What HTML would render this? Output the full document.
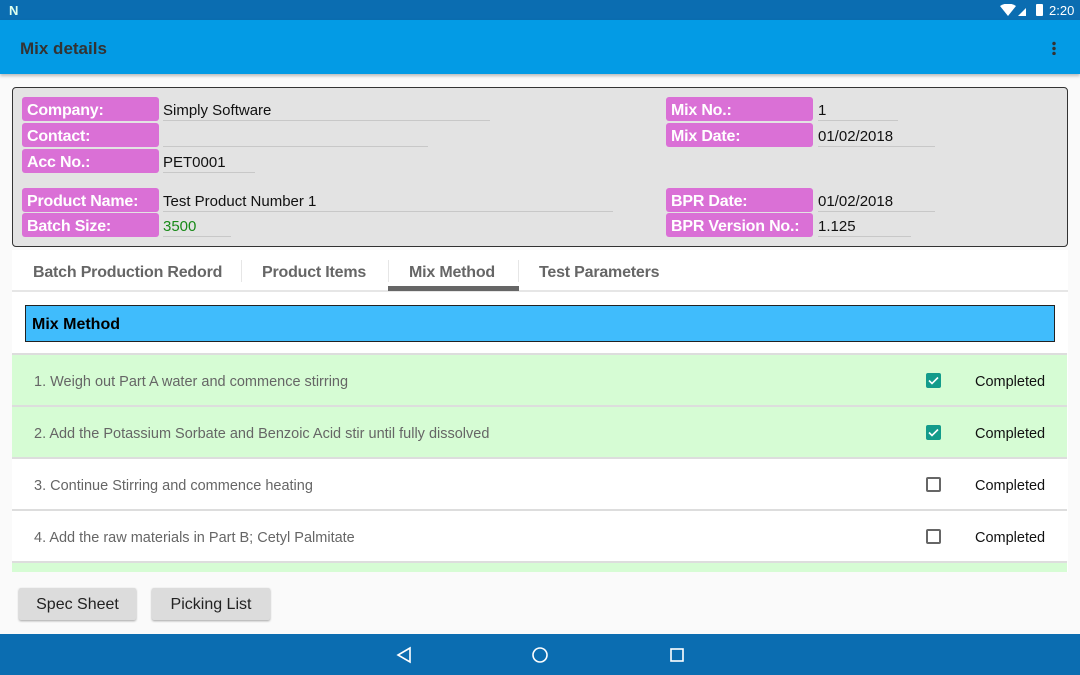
<!DOCTYPE html>
<html><head><style>
*{margin:0;padding:0;box-sizing:border-box}
body{width:1080px;height:675px;overflow:hidden;background:#fafafa;font-family:"Liberation Sans",sans-serif;position:relative}
.a{position:absolute}
.lbl{position:absolute;background:#da70d6;color:#fff;font-weight:bold;font-size:16px;height:24px;line-height:27px;padding-left:5px;border-radius:3px;width:137px;letter-spacing:-0.2px}
.val{position:absolute;font-size:15px;color:#111;height:24px;line-height:28px;border-bottom:1px solid #c8c8c8}
.tab{position:absolute;top:264px;font-size:16px;font-weight:bold;color:#666;letter-spacing:-0.2px}
.row{position:absolute;left:12px;width:1055px;height:52px;border-top:2px solid #ddd}
.row span{position:absolute;left:22px;top:19px;font-size:14.5px;color:#666}
.row b{position:absolute;left:963px;top:19px;font-size:14.5px;font-weight:normal;color:#111}
.cb{position:absolute;left:914px;top:18px;width:15px;height:15px;border-radius:2px}
.btn{position:absolute;top:588px;height:32px;background:#dcdcdc;font-size:16px;color:#222;line-height:34px;text-align:center;box-shadow:0 1px 2px rgba(0,0,0,.35);border-radius:2px}
</style></head><body>
<div class="a" style="left:0;top:0;width:1080px;height:20px;background:#0b6db1"></div>
<div class="a" style="left:9px;top:3px;color:#dfe;font-weight:bold;font-size:13px">N</div>
<svg class="a" style="left:1000px;top:4px" width="30" height="13"><path d="M0 2 Q8 -3 16 2 L8 12Z" fill="#fff"/><path d="M18 12 L26 4 L26 12Z" fill="#fff"/></svg>
<div class="a" style="left:1036px;top:4px;width:7px;height:12px;background:#fff;border-radius:1px"></div>
<div class="a" style="left:1049px;top:3px;color:#fff;font-size:13px">2:20</div>
<div class="a" style="left:0;top:20px;width:1080px;height:54px;background:#039be5;box-shadow:0 2px 3px rgba(0,0,0,.25)"></div>
<div class="a" style="left:20px;top:39px;font-size:17px;font-weight:bold;color:#333">Mix details</div>
<div class="a" style="left:1052px;top:41px;width:4px;height:14px;background:radial-gradient(circle,#333 1.5px,transparent 2px) 0 0/4px 5px"></div>

<div class="a" style="left:12px;top:87px;width:1056px;height:160px;background:#e3e3e3;border:1.5px solid #333;border-radius:4px"></div>
<div class="lbl" style="left:22px;top:97px">Company:</div>
<div class="lbl" style="left:22px;top:123px">Contact:</div>
<div class="lbl" style="left:22px;top:149px">Acc No.:</div>
<div class="lbl" style="left:22px;top:188px">Product Name:</div>
<div class="lbl" style="left:22px;top:213px">Batch Size:</div>
<div class="val" style="left:163px;top:97px;width:327px">Simply Software</div>
<div class="val" style="left:163px;top:123px;width:265px"></div>
<div class="val" style="left:163px;top:149px;width:92px">PET0001</div>
<div class="val" style="left:163px;top:188px;width:450px">Test Product Number 1</div>
<div class="val" style="left:163px;top:213px;width:68px;color:#188a18">3500</div>
<div class="lbl" style="left:666px;top:97px;width:147px">Mix No.:</div>
<div class="lbl" style="left:666px;top:123px;width:147px">Mix Date:</div>
<div class="lbl" style="left:666px;top:188px;width:147px">BPR Date:</div>
<div class="lbl" style="left:666px;top:213px;width:147px">BPR Version No.:</div>
<div class="val" style="left:818px;top:97px;width:80px">1</div>
<div class="val" style="left:818px;top:123px;width:117px">01/02/2018</div>
<div class="val" style="left:818px;top:188px;width:117px">01/02/2018</div>
<div class="val" style="left:818px;top:213px;width:93px">1.125</div>

<div class="a" style="left:12px;top:250px;width:1056px;height:322px;background:#fff"></div>
<div class="a" style="left:12px;top:290px;width:1056px;height:2px;background:#e6e6e6"></div>
<div class="tab" style="left:33px">Batch Production Redord</div>
<div class="a" style="left:241px;top:260px;width:1px;height:22px;background:#e6e6e6"></div>
<div class="tab" style="left:262px">Product Items</div>
<div class="a" style="left:388px;top:260px;width:1px;height:22px;background:#e6e6e6"></div>
<div class="tab" style="left:409px">Mix Method</div>
<div class="a" style="left:388px;top:286px;width:131px;height:5px;background:#666"></div>
<div class="a" style="left:518px;top:260px;width:1px;height:22px;background:#e6e6e6"></div>
<div class="tab" style="left:539px">Test Parameters</div>

<div class="a" style="left:25px;top:305px;width:1030px;height:37px;background:#40bcfc;border:1.5px solid #222;font-weight:bold;font-size:16px;line-height:37px;padding-left:6px">Mix Method</div>

<div class="row" style="top:353px;background:#d6fcd4"><span>1. Weigh out Part A water and commence stirring</span><div class="cb" style="background:#139b8b"><svg width="15" height="15"><path d="M3 7.5L6 10.5L12 4.5" stroke="#fff" stroke-width="1.6" fill="none"/></svg></div><b>Completed</b></div>
<div class="row" style="top:405px;background:#d6fcd4"><span>2. Add the Potassium Sorbate and Benzoic Acid stir until fully dissolved</span><div class="cb" style="background:#139b8b"><svg width="15" height="15"><path d="M3 7.5L6 10.5L12 4.5" stroke="#fff" stroke-width="1.6" fill="none"/></svg></div><b>Completed</b></div>
<div class="row" style="top:457px;background:#fff"><span>3. Continue Stirring and commence heating</span><div class="cb" style="border:2px solid #666"></div><b>Completed</b></div>
<div class="row" style="top:509px;background:#fff"><span>4. Add the raw materials in Part B; Cetyl Palmitate</span><div class="cb" style="border:2px solid #666"></div><b>Completed</b></div>
<div class="row" style="top:561px;height:11px;background:#d6fcd4"></div>

<div class="btn" style="left:19px;width:117px">Spec Sheet</div>
<div class="btn" style="left:152px;width:118px">Picking List</div>

<div class="a" style="left:0;top:634px;width:1080px;height:41px;background:#0b6db1"></div>
<svg class="a" style="left:390px;top:644px" width="300" height="22"><path d="M20 4L8 11L20 18Z" stroke="#fff" stroke-width="1.6" fill="none"/><circle cx="150" cy="11" r="7" stroke="#fff" stroke-width="1.6" fill="none"/><rect x="281" y="5" width="12" height="12" stroke="#fff" stroke-width="1.6" fill="none"/></svg>
</body></html>
